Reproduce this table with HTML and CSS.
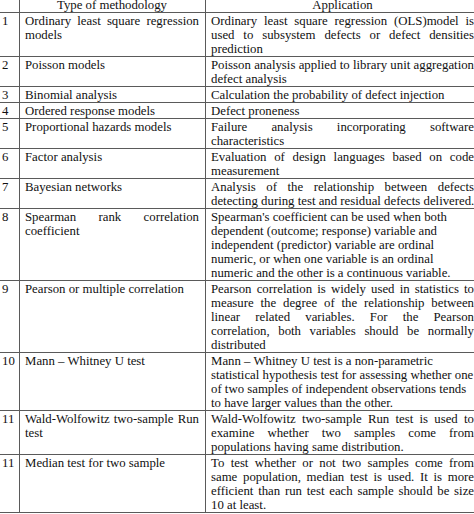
FILE: index.html
```html
<!DOCTYPE html>
<html lang="en">
<head>
<meta charset="utf-8">
<title>Methodologies</title>
<link rel="stylesheet" href="styles.css">
</head>
<body>
<table class="methods">
  <colgroup>
    <col class="c-num">
    <col class="c-type">
    <col class="c-app">
  </colgroup>
  <thead>
    <tr><th></th><th>Type of methodology</th><th>Application</th></tr>
  </thead>
  <tbody>
    <tr>
      <td class="num">1</td>
      <td><span class="ln j">Ordinary least square regression</span><span class="ln">models</span></td>
      <td><span class="ln j">Ordinary least square regression (OLS)model is</span><span class="ln j">used to subsystem defects or defect densities</span><span class="ln">prediction</span></td>
    </tr>
    <tr>
      <td class="num">2</td>
      <td><span class="ln">Poisson models</span></td>
      <td><span class="ln j">Poisson analysis applied to library unit aggregation</span><span class="ln">defect analysis</span></td>
    </tr>
    <tr>
      <td class="num">3</td>
      <td><span class="ln">Binomial analysis</span></td>
      <td><span class="ln">Calculation the probability of defect injection</span></td>
    </tr>
    <tr>
      <td class="num">4</td>
      <td><span class="ln">Ordered response models</span></td>
      <td><span class="ln">Defect proneness</span></td>
    </tr>
    <tr>
      <td class="num">5</td>
      <td><span class="ln">Proportional hazards models</span></td>
      <td><span class="ln j">Failure analysis incorporating software</span><span class="ln">characteristics</span></td>
    </tr>
    <tr>
      <td class="num">6</td>
      <td><span class="ln">Factor analysis</span></td>
      <td><span class="ln j">Evaluation of design languages based on code</span><span class="ln">measurement</span></td>
    </tr>
    <tr>
      <td class="num">7</td>
      <td><span class="ln">Bayesian networks</span></td>
      <td><span class="ln j">Analysis of the relationship between defects</span><span class="ln">detecting during test and residual defects delivered.</span></td>
    </tr>
    <tr>
      <td class="num">8</td>
      <td><span class="ln j">Spearman rank correlation</span><span class="ln">coefficient</span></td>
      <td><span class="ln">Spearman's coefficient can be used when both</span><span class="ln">dependent (outcome; response) variable and</span><span class="ln">independent (predictor) variable are ordinal</span><span class="ln">numeric, or when one variable is an ordinal</span><span class="ln">numeric and the other is a continuous variable.</span></td>
    </tr>
    <tr>
      <td class="num">9</td>
      <td><span class="ln">Pearson or multiple correlation</span></td>
      <td><span class="ln j">Pearson correlation is widely used in statistics to</span><span class="ln j">measure the degree of the relationship between</span><span class="ln j">linear related variables. For the Pearson</span><span class="ln j">correlation, both variables should be normally</span><span class="ln">distributed</span></td>
    </tr>
    <tr>
      <td class="num">10</td>
      <td><span class="ln">Mann – Whitney U test</span></td>
      <td><span class="ln">Mann – Whitney U test is a non-parametric</span><span class="ln">statistical hypothesis test for assessing whether one</span><span class="ln">of two samples of independent observations tends</span><span class="ln">to have larger values than the other.</span></td>
    </tr>
    <tr>
      <td class="num">11</td>
      <td><span class="ln j">Wald-Wolfowitz two-sample Run</span><span class="ln">test</span></td>
      <td><span class="ln j">Wald-Wolfowitz two-sample Run test is used to</span><span class="ln j">examine whether two samples come from</span><span class="ln">populations having same distribution.</span></td>
    </tr>
    <tr>
      <td class="num">11</td>
      <td><span class="ln">Median test for two sample</span></td>
      <td><span class="ln j">To test whether or not two samples come from</span><span class="ln j">same population, median test is used. It is more</span><span class="ln j">efficient than run test each sample should be size</span><span class="ln">10 at least.</span></td>
    </tr>
  </tbody>
</table>
</body>
</html>
```

FILE: styles.css
```css
html, body {
  margin: 0;
  padding: 0;
  background: #ffffff;
  overflow: hidden;
}

.methods {
  margin: -4px 0 0 -2px;
  border-collapse: collapse;
  table-layout: fixed;
  width: 482px;
  font-family: "Liberation Serif", "Times New Roman", serif;
  font-size: 12.8px;
  line-height: 14px;
  color: #111111;
}

.c-num { width: 21px; }
.c-type { width: 186px; }
.c-app { width: 275px; }

.methods th,
.methods td {
  border: 1px solid #5a5a5a;
  padding: 1px 6px 0 5px;
  vertical-align: top;
  text-align: left;
}

.methods th {
  font-weight: normal;
  text-align: center;
}

.methods td.num {
  padding: 1px 0 0 3px;
}

.ln {
  display: block;
  white-space: nowrap;
}

.ln.j {
  text-align: justify;
  text-align-last: justify;
}
```
